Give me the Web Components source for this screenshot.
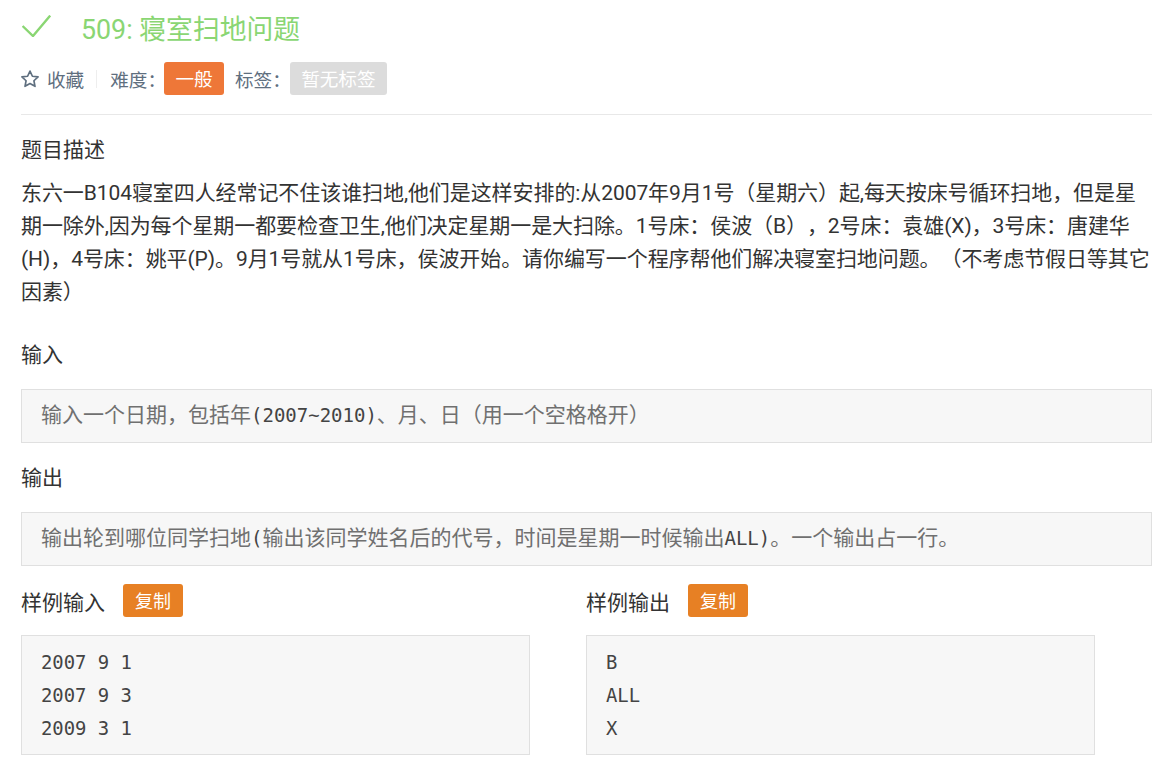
<!DOCTYPE html>
<html lang="zh-CN"><head><meta charset="utf-8"><style>
html,body{margin:0;background:#fff}
body{font-family:"Roboto","Noto Sans CJK SC",sans-serif;color:#333;overflow:hidden;height:772px}
</style></head><body>
<problem-page></problem-page>
<script>
const def=(n,css,html)=>customElements.define(n,class extends HTMLElement{connectedCallback(){if(this.shadowRoot)return;this.attachShadow({mode:'open'}).innerHTML='<style>'+css+'</style>'+html;}});
const CJK='"Roboto","Noto Sans CJK SC",sans-serif';
def('x-tag',`:host{display:inline-flex;align-items:center;justify-content:center;box-sizing:border-box;height:33px;padding:3px 11.4px 0;border-radius:3px;color:#fff;font-size:18.6px;background:var(--bg,#ee7738);line-height:1}`,`<slot></slot>`);
def('x-copy',`:host{display:inline-flex;align-items:center;justify-content:center;box-sizing:border-box;width:60px;height:33px;padding-bottom:1px;border-radius:3px;color:#fff;font-size:18px;background:#e78024;margin-left:var(--gap,18px)}`,`<slot></slot>`);
def('section-title',`:host{display:block;font-size:21px;line-height:31px;padding-bottom:1px;color:#333}`,`<slot></slot>`);
def('text-box',`:host{display:block;box-sizing:border-box;height:54px;background:#f7f7f7;border:1px solid #e0e0e0;padding:0 19px;font:19px/47px "DejaVu Sans Mono","Noto Sans CJK SC",monospace;color:#444;text-spacing-trim:space-all}
::slotted(span){color:#707070;font-family:"Noto Sans CJK SC",sans-serif;font-size:21px}`,`<slot></slot>`);
def('sample-col',`:host{display:block;width:509px}
.h{display:flex;align-items:center;height:33px;font-size:21px;color:#333;margin-bottom:18px}
pre{margin:0;box-sizing:border-box;height:120px;background:#f7f7f7;border:1px solid #e0e0e0;padding:10px 19px;font:18.9px/33px "DejaVu Sans Mono",monospace;color:#444}`,
`<div class="h"><slot name="title"></slot><x-copy>复制</x-copy></div><pre><slot></slot></pre>`);
def('problem-page',`:host{display:block;padding:0 6px 0 21px;font-family:${CJK}}
.title{display:flex;align-items:center;height:54px;padding-bottom:2px;color:#8ad673;font-size:26.8px}
.title svg{margin:-2px 30px 0 1px;flex:none}
.meta{display:flex;align-items:center;height:33px;margin-top:6px;font-size:18.6px;color:#5f6f7f}
.sep{width:1px;height:18px;background:#eee;margin:0 13px 0 12px}
.meta svg{margin:0 7px 0 -1px;flex:none}
hr{border:0;border-top:1px solid #e8e8e8;margin:19px 0 0}
.desc{font-size:21px;line-height:33px;margin:0;color:#333;text-spacing-trim:space-all;letter-spacing:-.08px}
.samples{display:flex;gap:56px}
`,`
<div class="title"><svg width="29" height="22" viewBox="0 0 29 22"><path d="M0.6 11 L11 21 L28.2 0.6" fill="none" stroke="#8ad673" stroke-width="2.4"/></svg><span>509: 寝室扫地问题</span></div>
<div class="meta"><svg width="20" height="20" viewBox="0 0 24 24"><path d="M12 2.5l2.9 6.2 6.8.8-5 4.6 1.3 6.7-6-3.4-6 3.4 1.3-6.7-5-4.6 6.8-.8z" fill="none" stroke="#5f6f7f" stroke-width="2" stroke-linejoin="round"/></svg><span>收藏</span><span class="sep"></span><span style="margin-right:-2px">难度：</span><x-tag>一般</x-tag><span style="margin-left:11px;margin-right:-1px">标签：</span><x-tag style="--bg:#dcdcdc">暂无标签</x-tag></div>
<hr>
<section-title style="margin-top:20px">题目描述</section-title>
<p class="desc" style="margin-top:10px">东六一B104寝室四人经常记不住该谁扫地,他们是这样安排的:从2007年9月1号（星期六）起,每天按床号循环扫地，但是星期一除外,因为每个星期一都要检查卫生,他们决定星期一是大扫除。1号床：侯波（B），2号床：袁雄(X)，3号床：唐建华(H)，4号床：姚平(P)。9月1号就从1号床，侯波开始。请你编写一个程序帮他们解决寝室扫地问题。（不考虑节假日等其它因素）</p>
<section-title style="margin-top:31px">输入</section-title>
<text-box style="margin-top:17px"><span>输入一个日期，包括年</span>(2007~2010)<span>、月、日（用一个空格格开）</span></text-box>
<section-title style="margin-top:20px">输出</section-title>
<text-box style="margin-top:17px"><span>输出轮到哪位同学扫地</span>(<span>输出该同学姓名后的代号，时间是星期一时候输出</span>ALL)<span>。一个输出占一行。</span></text-box>
<div class="samples" style="margin-top:18px">
<sample-col><span slot="title">样例输入</span>2007 9 1
2007 9 3
2009 3 1</sample-col>
<sample-col style="--gap:18px"><span slot="title">样例输出</span>B
ALL
X</sample-col>
</div>`);
</script>
</body></html>
